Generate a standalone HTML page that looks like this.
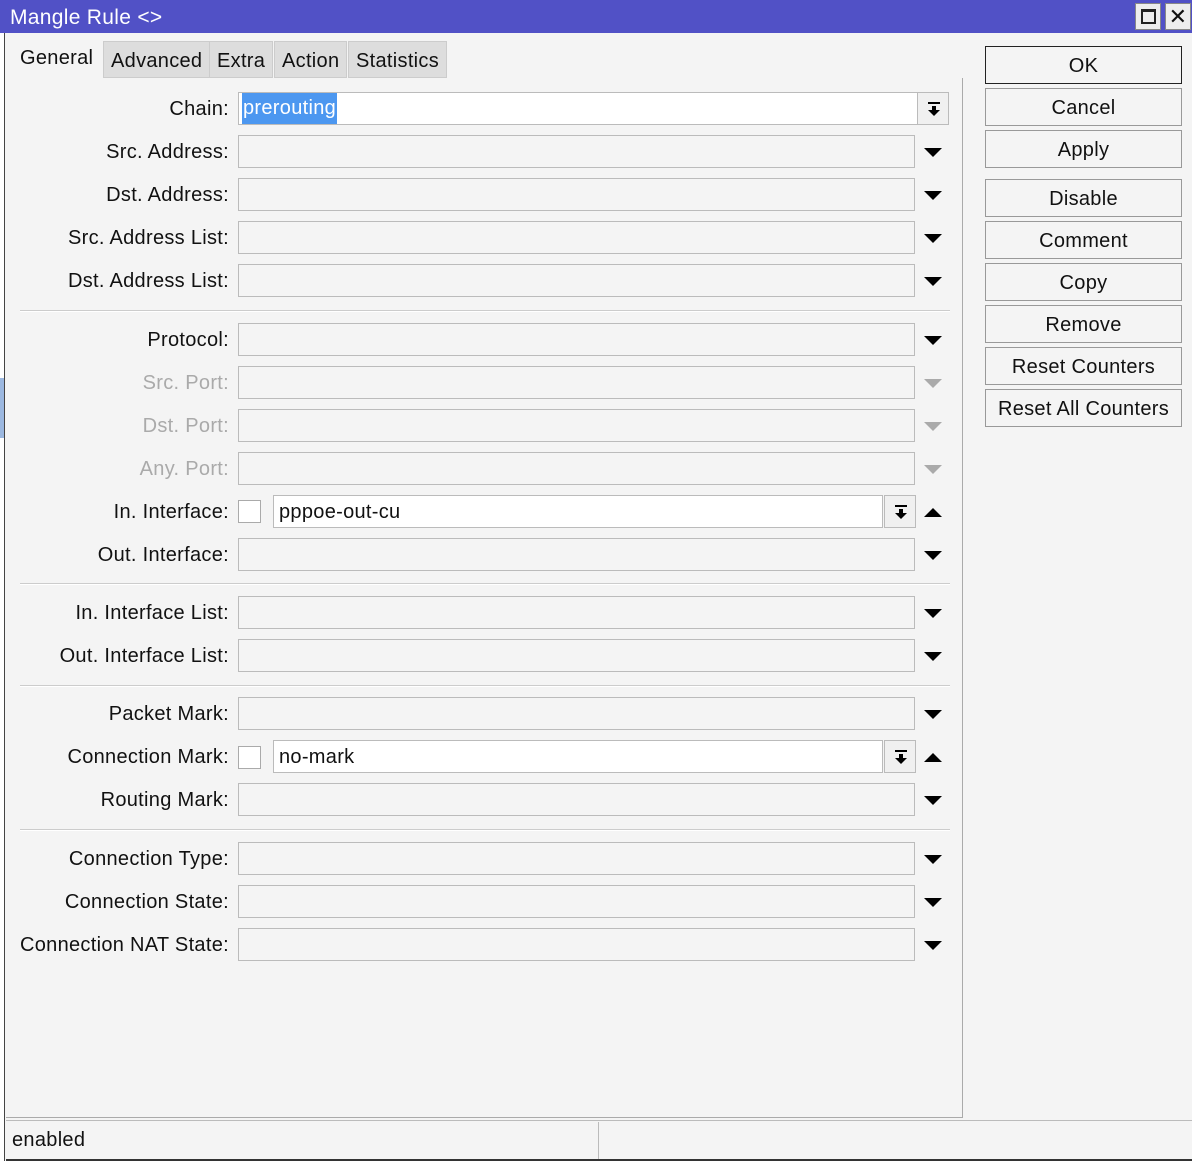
<!DOCTYPE html>
<html><head><style>
*{box-sizing:border-box;margin:0;padding:0}
body{width:1192px;height:1161px;background:#f4f4f4;font-family:"Liberation Sans","DejaVu Sans",sans-serif;font-size:20px;color:#111;position:relative;overflow:hidden;letter-spacing:0.3px}
.a{position:absolute}
.title{left:0;top:0;width:1192px;height:33px;background:#5151c6;color:#fff;font-size:21px;line-height:36px;padding-left:10px}
.tb{top:3px;width:26px;height:27px;background:#eee;border:1px solid #888}
.tab{top:41px;height:37px;background:#ddd;border:1px solid #ccc;line-height:38px;padding:0 7px;font-size:20px}
.lbl{right:963px;width:230px;text-align:right;height:33px;line-height:35px}
.in{left:238px;width:677px;height:33px;border:1px solid #bbb;background:#f4f4f4}
.dis{color:#aaa}
.tri{width:0;height:0;border-left:9px solid transparent;border-right:9px solid transparent;border-top:9px solid #000;left:924px}
.up{border-top:none;border-bottom:9px solid #000}
.sep{left:20px;width:930px;height:2px;border-top:1px solid #ccc;border-bottom:1px solid #fff}
.btn{left:985px;width:197px;height:38px;border:1px solid #999;background:#f4f4f4;text-align:center;line-height:39px}
.dd{width:32px;height:33px;border:1px solid #bbb;background:#f0f0f0}
.dd svg{position:absolute;left:8px;top:8px}
</style></head><body>
<div class="a" style="left:0;top:33px;width:5px;height:1128px;background:#fff;border-right:1px solid #444"></div>
<div class="a" style="left:0;top:378px;width:4px;height:60px;background:#9cb8e0"></div>
<div class="a title">Mangle Rule &lt;&gt;</div>
<div class="a tb" style="left:1135px"><div class="a" style="left:5px;top:5px;width:15px;height:15px;border:2px solid #222;border-top-width:3px"></div></div>
<div class="a tb" style="left:1165px;font-size:22px;font-weight:bold;text-align:center;line-height:25px">✕</div>
<div class="a" style="left:962px;top:78px;width:1px;height:1040px;background:#aaa"></div>
<div class="a" style="left:6px;top:1117px;width:957px;height:1px;background:#aaa"></div>
<div class="a" style="left:20px;top:41px;line-height:34px;">General</div>
<div class="a tab" style="left:103px">Advanced</div>
<div class="a tab" style="left:209px">Extra</div>
<div class="a tab" style="left:274px">Action</div>
<div class="a tab" style="left:348px">Statistics</div>

<div class="a lbl" style="top:92px">Chain:</div>
<div class="a in" style="width:680px;top:92px;background:#fff"><span style="background:#4c97f0;color:#fff;padding:0 1px;margin-left:3px;line-height:31px;display:inline-block">prerouting</span></div>
<div class="a dd" style="left:917px;top:92px"><svg width="16" height="16" viewBox="0 0 16 16"><rect x="2" y="1" width="12" height="2" fill="#000"/><rect x="6" y="5" width="4" height="4" fill="#000"/><path d="M2 9H14L8 15Z" fill="#000"/></svg></div>

<div class="a lbl" style="top:135px">Src. Address:</div><div class="a in" style="top:135px"></div><div class="a tri" style="top:148px"></div>
<div class="a lbl" style="top:178px">Dst. Address:</div><div class="a in" style="top:178px"></div><div class="a tri" style="top:191px"></div>
<div class="a lbl" style="top:221px">Src. Address List:</div><div class="a in" style="top:221px"></div><div class="a tri" style="top:234px"></div>
<div class="a lbl" style="top:264px">Dst. Address List:</div><div class="a in" style="top:264px"></div><div class="a tri" style="top:277px"></div>
<div class="a sep" style="top:310px"></div>
<div class="a lbl" style="top:323px">Protocol:</div><div class="a in" style="top:323px"></div><div class="a tri" style="top:336px"></div>
<div class="a lbl dis" style="top:366px">Src. Port:</div><div class="a in" style="top:366px"></div><div class="a tri" style="top:379px;border-top-color:#aaa"></div>
<div class="a lbl dis" style="top:409px">Dst. Port:</div><div class="a in" style="top:409px"></div><div class="a tri" style="top:422px;border-top-color:#aaa"></div>
<div class="a lbl dis" style="top:452px">Any. Port:</div><div class="a in" style="top:452px"></div><div class="a tri" style="top:465px;border-top-color:#aaa"></div>
<div class="a lbl" style="top:495px">In. Interface:</div>
<div class="a" style="left:238px;top:500px;width:23px;height:23px;border:1px solid #aaa;background:#fff"></div>
<div class="a in" style="left:273px;width:610px;top:495px;background:#fff;padding-left:5px;line-height:33px">pppoe-out-cu</div>
<div class="a dd" style="left:884px;top:495px"><svg width="16" height="16" viewBox="0 0 16 16"><rect x="2" y="1" width="12" height="2" fill="#000"/><rect x="6" y="5" width="4" height="4" fill="#000"/><path d="M2 9H14L8 15Z" fill="#000"/></svg></div>
<div class="a tri up" style="top:508px"></div>
<div class="a lbl" style="top:538px">Out. Interface:</div><div class="a in" style="top:538px"></div><div class="a tri" style="top:551px"></div>
<div class="a sep" style="top:583px"></div>
<div class="a lbl" style="top:596px">In. Interface List:</div><div class="a in" style="top:596px"></div><div class="a tri" style="top:609px"></div>
<div class="a lbl" style="top:639px">Out. Interface List:</div><div class="a in" style="top:639px"></div><div class="a tri" style="top:652px"></div>
<div class="a sep" style="top:685px"></div>
<div class="a lbl" style="top:697px">Packet Mark:</div><div class="a in" style="top:697px"></div><div class="a tri" style="top:710px"></div>
<div class="a lbl" style="top:740px">Connection Mark:</div>
<div class="a" style="left:238px;top:746px;width:23px;height:23px;border:1px solid #aaa;background:#fff"></div>
<div class="a in" style="left:273px;width:610px;top:740px;background:#fff;padding-left:5px;line-height:33px">no-mark</div>
<div class="a dd" style="left:884px;top:740px"><svg width="16" height="16" viewBox="0 0 16 16"><rect x="2" y="1" width="12" height="2" fill="#000"/><rect x="6" y="5" width="4" height="4" fill="#000"/><path d="M2 9H14L8 15Z" fill="#000"/></svg></div>
<div class="a tri up" style="top:753px"></div>
<div class="a lbl" style="top:783px">Routing Mark:</div><div class="a in" style="top:783px"></div><div class="a tri" style="top:796px"></div>
<div class="a sep" style="top:829px"></div>
<div class="a lbl" style="top:842px">Connection Type:</div><div class="a in" style="top:842px"></div><div class="a tri" style="top:855px"></div>
<div class="a lbl" style="top:885px">Connection State:</div><div class="a in" style="top:885px"></div><div class="a tri" style="top:898px"></div>
<div class="a lbl" style="top:928px">Connection NAT State:</div><div class="a in" style="top:928px"></div><div class="a tri" style="top:941px"></div>

<div class="a btn" style="top:46px;border:1px solid #222">OK</div>
<div class="a btn" style="top:88px">Cancel</div>
<div class="a btn" style="top:130px">Apply</div>
<div class="a btn" style="top:179px">Disable</div>
<div class="a btn" style="top:221px">Comment</div>
<div class="a btn" style="top:263px">Copy</div>
<div class="a btn" style="top:305px">Remove</div>
<div class="a btn" style="top:347px">Reset Counters</div>
<div class="a btn" style="top:389px">Reset All Counters</div>

<div class="a" style="left:6px;top:1120px;width:1186px;height:41px;border-top:1px solid #bbb;border-bottom:2px solid #333"></div>
<div class="a" style="left:12px;top:1124px;line-height:32px">enabled</div>
<div class="a" style="left:598px;top:1122px;width:1px;height:37px;background:#bbb"></div>
</body></html>
